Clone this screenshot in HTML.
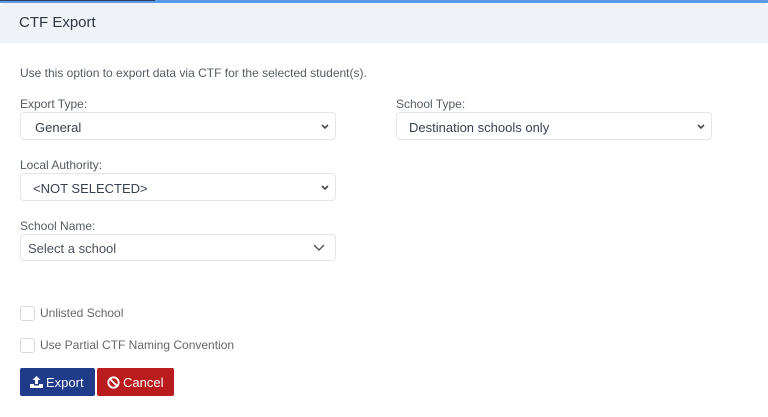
<!DOCTYPE html>
<html><head><style>
body{margin:0;width:768px;height:417px;overflow:hidden;background:#fff;font-family:"Liberation Sans",sans-serif;position:relative}
.top{position:absolute;left:0;top:0;width:768px;height:3px;background:#5a9be8}
.top:before{content:"";position:absolute;left:0;top:0;width:155px;height:1px;background:#2d3f5c}
.hdr{position:absolute;left:0;top:3px;width:768px;height:40px;background:#eff3f7;border-radius:4px 4px 0 0}
.hdr span{position:absolute;left:19px;top:11px;font-size:15px;color:#2f3742}
.t{position:absolute;font-size:12px;color:#555b63}
.sel{position:absolute;height:28px;border:1px solid #e3e5e8;border-radius:4px;box-sizing:border-box;font-size:13px;color:#374151;padding:7px 0 0 14px}
.sel svg{position:absolute;right:5px;top:10px}
.cb{position:absolute;left:20px;width:13px;height:13px;border:1px solid #d5d8dc;border-radius:3px}
.btn{position:absolute;top:368px;height:28px;border-radius:2px;color:#fff;font-size:13px;box-sizing:border-box;padding-top:7px}
</style></head><body>
<div class="top"></div>
<div class="hdr"><span>CTF Export</span></div>
<div class="t" style="left:20px;top:66px">Use this option to export data via CTF for the selected student(s).</div>
<div class="t" style="left:20px;top:97px">Export Type:</div>
<div class="t" style="left:396px;top:97px">School Type:</div>
<div class="sel" style="left:20px;top:112px;width:316px;padding-left:14px">General<svg width="10" height="8" viewBox="0 0 10 8"><path d="M2 2l3 3 3-3" stroke="#444" stroke-width="1.6" fill="none"/></svg></div>
<div class="sel" style="left:396px;top:112px;width:316px;padding-left:12px">Destination schools only<svg width="10" height="8" viewBox="0 0 10 8"><path d="M2 2l3 3 3-3" stroke="#444" stroke-width="1.6" fill="none"/></svg></div>
<div class="t" style="left:20px;top:158px">Local Authority:</div>
<div class="sel" style="left:20px;top:173px;width:316px;padding-left:12px">&lt;NOT SELECTED&gt;<svg width="10" height="8" viewBox="0 0 10 8"><path d="M2 2l3 3 3-3" stroke="#444" stroke-width="1.6" fill="none"/></svg></div>
<div class="t" style="left:20px;top:219px">School Name:</div>
<div class="sel" style="left:20px;top:234px;width:316px;height:27px;padding-left:7px;padding-top:6px;color:#4b5160">Select a school<svg width="14" height="8" viewBox="0 0 14 8" style="right:9px;top:9px"><path d="M2 1l5 5 5-5" stroke="#555" stroke-width="1.4" fill="none"/></svg></div>
<div class="cb" style="top:306px"></div>
<div class="t" style="left:40px;top:306px;color:#666">Unlisted School</div>
<div class="cb" style="top:338px"></div>
<div class="t" style="left:40px;top:338px;color:#666">Use Partial CTF Naming Convention</div>
<div class="btn" style="left:20px;width:75px;background:#1f3b8a;padding-left:10px"><svg width="13" height="12" viewBox="0 0 13 12" style="vertical-align:-1px;margin-right:3px"><path d="M6.5 0L2.5 4h2.5v4h3V4h2.5z M0 8h4v1.5h5V8h4v4H0z" fill="#fff"/></svg>Export</div>
<div class="btn" style="left:97px;width:77px;background:#b81c1c;padding-left:10px"><svg width="13" height="13" viewBox="0 0 13 13" style="vertical-align:-2px;margin-right:3px"><circle cx="6.5" cy="6.5" r="5.2" stroke="#fff" stroke-width="1.8" fill="none"/><path d="M3 3l7 7" stroke="#fff" stroke-width="1.8"/></svg>Cancel</div>
</body></html>
